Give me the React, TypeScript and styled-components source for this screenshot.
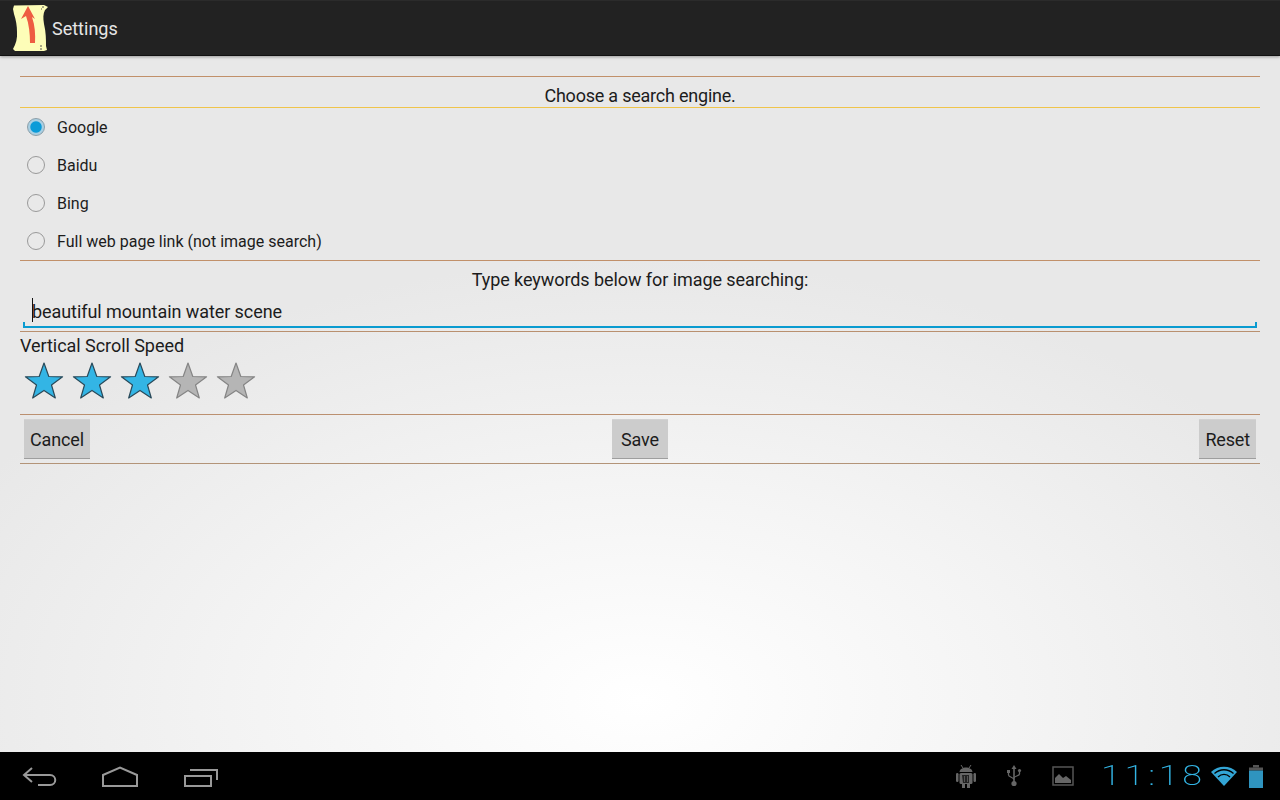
import React from "react";
import styled, { createGlobalStyle } from "styled-components";

const engines = ["Google", "Baidu", "Bing", "Full web page link (not image search)"];
const stars = [true, true, true, false, false];

const App = () => {
  return (
    <Screen>
      <GlobalStyle />
      <ActionBar>
        <svg width="38" height="48" viewBox="0 0 38 48">
          <path
            d="M3 1.5 L33 1 L37 3 L34 6 C32 10 32 14 33 20 C35 28 35 36 35 42 L36 46 L33 47 L4 47 L2 45 C5 40 6.5 34 6 28 C6 22 5 16 3 10 L2 5 Z"
            fill="#fdfdb8"
          />
          <path d="M19 39 L24 39 C24.5 30 24 22 21 13 L24 15 L17 2 L10 15 L15 12 C18 20 19 30 19 39 Z" fill="#ee5c42" />
          <path d="M31 3 h2 M30 5 h1 M29 42 h2 M29 45 h2" stroke="#555" strokeWidth="1" />
        </svg>
        <ActionTitle>Settings</ActionTitle>
      </ActionBar>

      <Content>
        <Rule $color="#c1906a" />
        <SectionTitle $height={30} $spacing={-0.22}>
          Choose a search engine.
        </SectionTitle>
        <Rule $color="#efc44a" />
        <RadioList>
          {engines.map((name, i) => (
            <RadioRow key={name}>
              <RadioCircle $checked={i === 0} />
              <RadioLabel>{name}</RadioLabel>
            </RadioRow>
          ))}
        </RadioList>
        <Rule $color="#c1906a" />
        <SectionTitle $height={37} $spacing={-0.07}>
          Type keywords below for image searching:
        </SectionTitle>
        <KeywordField>
          <Caret />
          beautiful mountain water scene
        </KeywordField>
        <Rule $color="#b9906f" />
        <SpeedLabel>Vertical Scroll Speed</SpeedLabel>
        <StarRow>
          {stars.map((on, i) => (
            <svg key={i} width="48" height="38" viewBox="0 0 48 38">
              <path
                d="M24 1 L28.8 14.5 L42.6 14.8 L31.5 23 L35.3 36 L24 28.4 L12.7 36 L16.5 23 L5.4 14.8 L19.2 14.5 Z"
                fill={on ? "#33b5e5" : "#b5b5b5"}
                stroke={on ? "#2a4a5a" : "#858585"}
                strokeWidth="1.2"
                strokeLinejoin="round"
              />
            </svg>
          ))}
        </StarRow>
        <Rule $color="#bb9070" />
        <ButtonRow>
          <FlatButton $align="start">Cancel</FlatButton>
          <FlatButton $align="center">Save</FlatButton>
          <FlatButton $align="end">Reset</FlatButton>
        </ButtonRow>
        <Rule $color="#b39478" />
      </Content>

      <NavBar>
        <NavKeys>
          <svg width="36" height="24" viewBox="0 0 36 24" fill="none" stroke="#999" strokeWidth="2">
            <path d="M10 4 L2 11 L10 18" />
            <path d="M2 11 H28 C35 11 35 21 28 21 H16" />
          </svg>
          <svg width="38" height="22" viewBox="0 0 38 22" fill="none" stroke="#999" strokeWidth="2">
            <path d="M1 21 V10 L18 2.5 L35 10 V21 Z" />
          </svg>
          <svg width="36" height="22" viewBox="0 0 36 22" fill="none" stroke="#999" strokeWidth="2">
            <rect x="1" y="11" width="26" height="10" />
            <path d="M6 5 H33 V15" />
          </svg>
        </NavKeys>
        <StatusArea>
          <NotificationIcons>
            <svg width="20" height="24" viewBox="0 0 20 24" fill="#666">
              <path d="M5 1 L7 4 M15 1 L13 4" stroke="#666" strokeWidth="1" />
              <path d="M3.5 8 C4 2 16 2 16.5 8 Z" />
              <rect x="3.5" y="9" width="13" height="11" rx="1.5" />
              <rect x="0" y="9" width="2.5" height="9" rx="1.2" />
              <rect x="17.5" y="9" width="2.5" height="9" rx="1.2" />
              <rect x="6" y="20" width="3" height="4" />
              <rect x="11" y="20" width="3" height="4" />
              <path d="M6 11 H13 V19 H7 Z" fill="#222" />
              <path d="M8 13 h1 M11 13 h1 M8 15 h1 M11 15 h1 M8 17 h1 M11 17 h1" stroke="#888" strokeWidth="1" />
            </svg>
            <svg width="16" height="22" viewBox="0 0 16 22" fill="#666">
              <path d="M8 3 V18" stroke="#666" strokeWidth="1.6" />
              <path d="M8 0 L10.5 4 H5.5 Z" />
              <path d="M2.5 7 V10 C2.5 12 8 12.5 8 14.5 M13.5 6 V9 C13.5 11 8 11 8 13" fill="none" stroke="#666" strokeWidth="1.3" />
              <rect x="1" y="5" width="3" height="3" />
              <circle cx="13.5" cy="5.5" r="1.6" />
              <circle cx="8" cy="18.5" r="2.6" />
            </svg>
            <svg width="22" height="20" viewBox="0 0 22 20">
              <rect x="1" y="1" width="20" height="18" fill="none" stroke="#555" strokeWidth="1.5" />
              <path d="M3 17 V12 L7 8 L11 12 L14 10 L19 14 V17 Z" fill="#666" />
            </svg>
          </NotificationIcons>
          <Clock>11:18</Clock>
          <svg width="26" height="20" viewBox="0 0 26 20">
            <path d="M0 6 C7 -1 19 -1 26 6 L13 20 Z" fill="#33a5d5" />
            <path d="M3.5 7.5 C9 2.5 17 2.5 22.5 7.5 M7 11 C10.5 7.5 15.5 7.5 19 11" fill="none" stroke="#000" strokeWidth="1.3" />
          </svg>
          <svg width="14" height="23" viewBox="0 0 14 23" fill="#2f94bf">
            <rect x="4" y="0" width="6" height="2.5" fill="#555" />
            <rect x="0" y="2.5" width="14" height="3" fill="#555" />
            <rect x="0" y="5.5" width="14" height="17.5" />
          </svg>
        </StatusArea>
      </NavBar>
    </Screen>
  );
};

export default App;

const GlobalStyle = createGlobalStyle`
  html, body {
    margin: 0;
    padding: 0;
  }
  body {
    font-family: Roboto, "Liberation Sans", sans-serif;
    color: #1c1c1c;
  }
`;

const Screen = styled.div`
  display: flex;
  flex-direction: column;
  width: 1280px;
  height: 800px;
  overflow: hidden;
  background: radial-gradient(ellipse 760px 440px at 640px 700px, #ffffff 0%, #f4f4f4 50%, #e8e8e8 100%);
  background-color: #e7e7e7;
`;

const ActionBar = styled.div`
  display: flex;
  align-items: center;
  flex: 0 0 56px;
  box-sizing: border-box;
  padding-left: 11px;
  gap: 3px;
  background: #222222;
  border-top: 1px solid #2b2b2b;
  border-bottom: 1px solid #111111;
  box-shadow: 0 1px 3px rgba(0, 0, 0, 0.35);
  position: relative;
`;

const ActionTitle = styled.span`
  font-size: 18px;
  color: #e6e6e6;
`;

const Content = styled.div`
  flex: 1;
  padding: 20px 20px 0;
`;

const Rule = styled.div<{ $color: string }>`
  height: 1px;
  background: ${(p) => p.$color};
`;

const SectionTitle = styled.div<{ $height: number; $spacing: number }>`
  display: flex;
  align-items: ${(p) => (p.$height > 30 ? "center" : "flex-end")};
  justify-content: center;
  height: ${(p) => p.$height}px;
  font-size: 18px;
  line-height: 22px;
  letter-spacing: ${(p) => p.$spacing}px;
`;

const RadioList = styled.div`
  display: flex;
  flex-direction: column;
`;

const RadioRow = styled.div`
  display: flex;
  align-items: center;
  height: 38px;
  padding-left: 7px;
`;

const RadioCircle = styled.span<{ $checked: boolean }>`
  width: 18px;
  height: 18px;
  box-sizing: border-box;
  border-radius: 50%;
  border: 1.5px solid ${(p) => (p.$checked ? "#8b9ea8" : "#999999")};
  background: ${(p) =>
    p.$checked ? "radial-gradient(circle, #0a9bd8 0 5.2px, #a8cfe3 6.2px)" : "#e9e9e9"};
  margin-right: 12px;
`;

const RadioLabel = styled.span`
  font-size: 16px;
`;

const KeywordField = styled.div`
  position: relative;
  box-sizing: border-box;
  height: 30px;
  margin: 0 3px 3px;
  padding-left: 9px;
  font-size: 18px;
  line-height: 28px;
  letter-spacing: -0.07px;
  border-bottom: 2px solid #0a9bd0;

  &::before,
  &::after {
    content: "";
    position: absolute;
    bottom: 0;
    width: 2px;
    height: 4px;
    background: #0a9bd0;
  }
  &::before {
    left: 0;
  }
  &::after {
    right: 0;
  }
`;

const Caret = styled.span`
  display: inline-block;
  width: 1px;
  height: 24px;
  margin-right: -1px;
  background: #111111;
  vertical-align: top;
`;

const SpeedLabel = styled.div`
  height: 30px;
  padding-top: 3px;
  box-sizing: border-box;
  font-size: 18px;
  line-height: 22px;
  letter-spacing: -0.05px;
`;

const StarRow = styled.div`
  display: flex;
  height: 52px;

  svg {
    display: block;
  }
`;

const ButtonRow = styled.div`
  display: grid;
  grid-template-columns: 1fr auto 1fr;
  align-items: center;
  height: 48px;
  padding: 0 4px;
`;

const FlatButton = styled.div<{ $align: string }>`
  justify-self: ${(p) => p.$align};
  box-sizing: border-box;
  min-width: 56px;
  height: 40px;
  padding: 0 6px;
  display: flex;
  align-items: center;
  justify-content: center;
  font-size: 18px;
  letter-spacing: -0.15px;
  background: #cccccc;
  border-top: 1px solid #d2d2d2;
  border-bottom: 1px solid #9e9e9e;
`;

const NavBar = styled.div`
  display: flex;
  align-items: center;
  justify-content: space-between;
  flex: 0 0 48px;
  background: #000000;
`;

const NavKeys = styled.div`
  display: flex;
  align-items: center;
  gap: 44px;
  padding-left: 22px;

  svg {
    display: block;
  }
`;

const StatusArea = styled.div`
  display: flex;
  align-items: center;
  padding-right: 17px;
  gap: 12px;

  svg {
    display: block;
  }
`;

const NotificationIcons = styled.div`
  display: flex;
  align-items: center;
  gap: 30px;
  margin-right: 15px;
`;

const Clock = styled.span`
  display: inline-block;
  width: 98px;
  font-size: 28px;
  font-weight: 200;
  letter-spacing: 3px;
  color: #33b5e5;
  line-height: 28px;
  white-space: nowrap;
  transform: scaleX(1.28);
  transform-origin: left center;
  will-change: transform;
`;
